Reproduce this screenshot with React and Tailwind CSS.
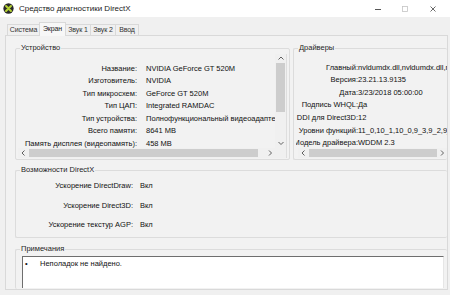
const device = [
  ["Название:", "NVIDIA GeForce GT 520M"],
  ["Изготовитель:", "NVIDIA"],
  ["Тип микросхем:", "GeForce GT 520M"],
  ["Тип ЦАП:", "Integrated RAMDAC"],
  ["Тип устройства:", "Полнофункциональный видеоадаптер (Microsoft)"],
  ["Всего памяти:", "8641 MB"],
  ["Память дисплея (видеопамять):", "458 MB"],
];

const drivers = [
  ["Главный:", "nvldumdx.dll,nvldumdx.dll,nvldumdx.dll"],
  ["Версия:", "23.21.13.9135"],
  ["Дата:", "3/23/2018 05:00:00"],
  ["Подпись WHQL:", "Да"],
  ["DDI для Direct3D:", "12"],
  ["Уровни функций:", "11_0,10_1,10_0,9_3,9_2,9_1"],
  ["Модель драйвера:", "WDDM 2.3"],
];

const features = [
  ["Ускорение DirectDraw:", "Вкл"],
  ["Ускорение Direct3D:", "Вкл"],
  ["Ускорение текстур AGP:", "Вкл"],
];

const tabs = [
  ["Система", "w-[33px]"],
  ["Экран", "w-[27px]"],
  ["Звук 1", "w-[26px]"],
  ["Звук 2", "w-[26px]"],
  ["Ввод", "w-[24px]"],
];

function Arrow({ dir }) {
  const pts = {
    up: "0.5,3.5 3,1 5.5,3.5",
    down: "0.5,1 3,3.5 5.5,1",
    left: "3.5,0.5 1,3 3.5,5.5",
    right: "1,0.5 3.5,3 1,5.5",
  }[dir];
  const vert = dir === "up" || dir === "down";
  return (
    <svg viewBox={vert ? "0 0 6 4.5" : "0 0 4.5 6"} className={vert ? "w-[6px] h-[4.5px]" : "w-[4.5px] h-[6px]"}>
      <polyline points={pts} fill="none" stroke="#606060" strokeWidth="1" />
    </svg>
  );
}

function HScroll({ thumb }) {
  return (
    <div className="flex items-center h-[10px] bg-[#f0f0f0]">
      <div className="w-[10px] flex justify-center"><Arrow dir="left" /></div>
      <div className={`h-[8px] bg-[#cdcdcd] ${thumb}`} />
      <div className="flex-1" />
      <div className="w-[10px] flex justify-center"><Arrow dir="right" /></div>
    </div>
  );
}

function Group({ title, className, children }) {
  return (
    <fieldset className={`border border-[#dcdcdc] rounded-[2px] min-w-0 ${className}`}>
      <legend className="ml-[4px] px-[1px] text-[7.5px] leading-[10px] text-[#1e1e1e]">{title}</legend>
      {children}
    </fieldset>
  );
}

export default function App() {
  return (
    <div className="w-[450px] h-[295px] overflow-hidden bg-[#f0f0f0] font-['Liberation_Sans',Arial,sans-serif] text-[#111]">
      {/* title bar */}
      <div className="h-[17px] bg-white flex items-center">
        <svg viewBox="0 0 12 12" className="w-[11px] h-[11px] ml-[3px]">
          <circle cx="6" cy="6" r="5.6" fill="#2a2a2a" />
          <path d="M3.3 3.3 L8.7 8.7 M8.7 3.3 L3.3 8.7" stroke="#b5d334" strokeWidth="2.2" strokeLinecap="round" />
        </svg>
        <span className="ml-[5px] text-[8px] text-[#222]">Средство диагностики DirectX</span>
        <div className="flex-1" />
        <svg viewBox="0 0 10 10" className="w-[10px] h-[10px] mr-[17px]">
          <line x1="2" y1="5.5" x2="8" y2="5.5" stroke="#444" strokeWidth="0.9" />
        </svg>
        <svg viewBox="0 0 10 10" className="w-[10px] h-[10px] mr-[18px]">
          <rect x="2.5" y="2.5" width="5" height="5" fill="none" stroke="#c4c4c4" strokeWidth="0.8" />
        </svg>
        <svg viewBox="0 0 10 10" className="w-[10px] h-[10px] mr-[12px]">
          <path d="M2.5 2.5 L7.5 7.5 M7.5 2.5 L2.5 7.5" stroke="#444" strokeWidth="0.8" />
        </svg>
      </div>

      {/* tabs */}
      <div className="flex items-end h-[13px] mt-[5px] pl-[7px] relative z-10">
        {tabs.map(([t, w]) =>
          t === "Экран" ? (
            <div key={t} className={`${w} h-[14px] -mb-[1px] -mr-[1px] bg-[#f7f7f7] border border-b-0 border-[#d9d9d9] flex items-center justify-center text-[7px] tracking-[-0.1px] text-[#222] whitespace-nowrap`}>
              {t}
            </div>
          ) : (
            <div key={t} className={`${w} h-[11px] border border-b-0 border-[#d9d9d9] -mr-[1px] flex items-center justify-center text-[7px] tracking-[-0.1px] text-[#333] whitespace-nowrap`}>
              {t}
            </div>
          )
        )}
      </div>

      {/* tab panel */}
      <div className="ml-[5px] w-[443px] h-[255px] border border-[#d9d9d9] bg-[#f2f2f2] pl-[9px] pt-[7px] flex flex-col">
        <div className="flex h-[117px] gap-[3px]">
          <Group title="Устройство" className="w-[275px] h-[117px]">
            <div className="ml-[2px] mr-[2px] mt-[1px] h-[104px] border-r border-[#dedede] flex flex-col">
              <div className="flex flex-1 min-h-0">
                <div className="flex-1 overflow-hidden pt-[8px]">
                  {device.map(([k, v]) => (
                    <div key={k} className="flex items-center h-[12.5px] text-[7.5px] whitespace-nowrap">
                      <span className="w-[119px] shrink-0 flex justify-end">{k}</span>
                      <span className="ml-[9px]">{v}</span>
                    </div>
                  ))}
                </div>
                <div className="w-[11px] flex flex-col items-center bg-[#f0f0f0]">
                  <div className="h-[9px] flex items-center"><Arrow dir="up" /></div>
                  <div className="w-[9px] h-[49px] bg-[#cdcdcd]" />
                  <div className="flex-1" />
                  <div className="h-[9px] flex items-center"><Arrow dir="down" /></div>
                </div>
              </div>
              <div className="flex">
                <div className="flex-1"><HScroll thumb="w-[229px] ml-[1px]" /></div>
                <div className="w-[11px] bg-[#f0f0f0]" />
              </div>
            </div>
          </Group>
          <Group title="Драйверы" className="flex-1 h-[117px] border-r-0">
            <div className="ml-[2px] mt-[1px] h-[104px] flex flex-col">
              <div className="flex-1 overflow-hidden pt-[7px]">
                {drivers.map(([k, v]) => (
                  <div key={k} className="flex items-center h-[12.6px] text-[7.5px] whitespace-nowrap">
                    <span className="w-[62px] shrink-0 flex justify-end">{k}</span>
                    <span>{v}</span>
                  </div>
                ))}
              </div>
              <div className="pl-[2px]"><HScroll thumb="w-[132px] ml-[1px]" /></div>
            </div>
          </Group>
        </div>

        <Group title="Возможности DirectX" className="mt-[5px] h-[73px] border-r-0">
          <div className="pt-[1px]">
            {features.map(([k, v]) => (
              <div key={k} className="flex items-center h-[19.5px] text-[7.5px] whitespace-nowrap">
                <span className="w-[117px] shrink-0 flex justify-end">{k}</span>
                <span className="ml-[7px]">{v}</span>
              </div>
            ))}
          </div>
        </Group>

        <Group title="Примечания" className="mt-[6px] flex-1 border-r-0 border-b-0">
          <div className="ml-[6px] mr-[3px] mt-[2px] h-[32px] bg-white border-t border-l border-[#6e6e6e] border-r-[#e6e6e6] border-r border-b-0">
            <div className="flex items-center h-[11px] mt-[1px] text-[7.5px]">
              <span className="w-[17px] pl-[2px]">•</span>
              <span>Неполадок не найдено.</span>
            </div>
          </div>
        </Group>
      </div>
    </div>
  );
}
